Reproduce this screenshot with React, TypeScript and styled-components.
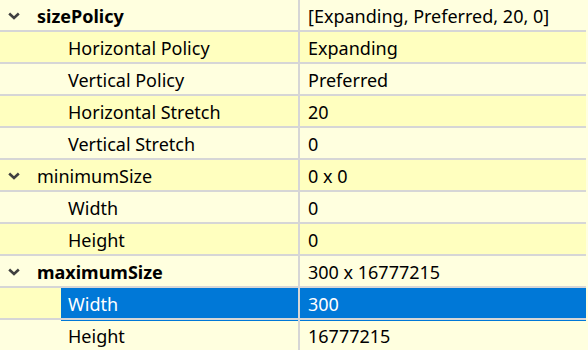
import React from 'react';
import styled, { createGlobalStyle } from 'styled-components';

const colors = {
  light: '#ffffdf',
  deep: '#ffffbf',
  grid: '#d6d6d6',
  select: '#0078d7',
  text: '#000000',
  branch: '#404040',
};

type Prop = {
  name: string;
  value: string;
  top?: boolean;
  bold?: boolean;
  selected?: boolean;
};

const props: Prop[] = [
  { name: 'sizePolicy', value: '[Expanding, Preferred, 20, 0]', top: true, bold: true },
  { name: 'Horizontal Policy', value: 'Expanding' },
  { name: 'Vertical Policy', value: 'Preferred' },
  { name: 'Horizontal Stretch', value: '20' },
  { name: 'Vertical Stretch', value: '0' },
  { name: 'minimumSize', value: '0 x 0', top: true },
  { name: 'Width', value: '0' },
  { name: 'Height', value: '0' },
  { name: 'maximumSize', value: '300 x 16777215', top: true, bold: true },
  { name: 'Width', value: '300', selected: true },
  { name: 'Height', value: '16777215' },
];

const GlobalStyle = createGlobalStyle`
  html, body {
    margin: 0;
    padding: 0;
    background: ${colors.light};
  }
  body {
    font-family: 'Noto Sans', 'Open Sans', sans-serif;
    font-size: 18px;
    color: ${colors.text};
  }
`;

const Tree = styled.div`
  width: 586px;
  display: flex;
  flex-direction: column;
`;

const Row = styled.div<{ $deep: boolean }>`
  display: grid;
  grid-template-columns: 300px 1fr;
  height: 32px;
  box-sizing: border-box;
  border-bottom: 2px solid ${colors.grid};
  background: ${(p) => (p.$deep ? colors.deep : colors.light)};
`;

const NameCell = styled.div`
  display: flex;
  align-items: stretch;
  border-right: 2px solid ${colors.grid};
  min-width: 0;
`;

const Indent = styled.div<{ $top: boolean }>`
  flex: none;
  width: ${(p) => (p.$top ? 30 : 61)}px;
  display: flex;
  align-items: center;
  padding: 1px 0 0 8px;
  box-sizing: border-box;
`;

const Label = styled.div<{ $bold?: boolean; $selected?: boolean }>`
  position: relative;
  flex: 1;
  display: flex;
  align-items: center;
  padding: 1px 0 0 7px;
  line-height: 1;
  font-weight: ${(p) => (p.$bold ? 700 : 400)};
  white-space: nowrap;
  background: ${(p) => (p.$selected ? colors.select : 'transparent')};
  color: ${(p) => (p.$selected ? '#ffffff' : colors.text)};

  &::after {
    content: '';
    display: ${(p) => (p.$selected ? 'block' : 'none')};
    position: absolute;
    left: 0;
    right: 0;
    bottom: -3px;
    height: 1px;
    background: ${colors.select};
    z-index: 1;
  }
`;

const ValueCell = styled(Label)`
  padding-left: 8px;
  font-weight: 400;
`;

function Chevron() {
  return (
    <svg width="12" height="8" viewBox="0 0 12 8">
      <path d="M1.2 1.5 L6 6 L10.8 1.5" fill="none" stroke={colors.branch} strokeWidth="2.6" />
    </svg>
  );
}

export default function App(): JSX.Element {
  return (
    <>
      <GlobalStyle />
      <Tree>
        {props.map((p, i) => (
          <Row key={i} $deep={i % 2 === 1}>
            <NameCell>
              <Indent $top={!!p.top}>{p.top && <Chevron />}</Indent>
              <Label $bold={p.bold} $selected={p.selected}>
                {p.name}
              </Label>
            </NameCell>
            <ValueCell $selected={p.selected}>{p.value}</ValueCell>
          </Row>
        ))}
      </Tree>
    </>
  );
}
